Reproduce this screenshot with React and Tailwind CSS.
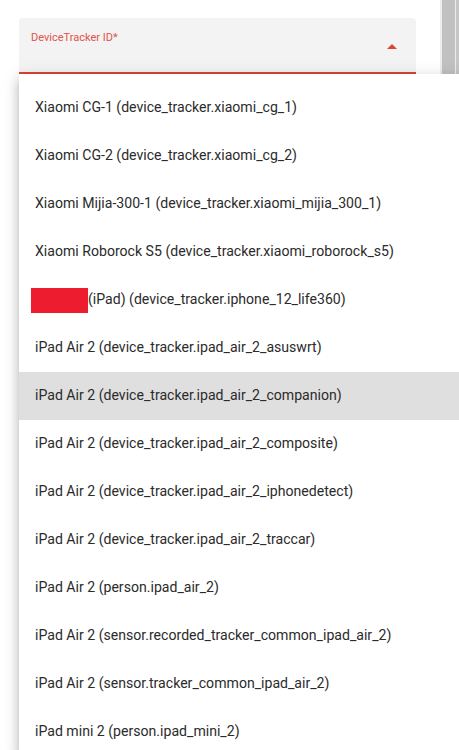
import React from 'react';

const items = [
  'Xiaomi CG-1 (device_tracker.xiaomi_cg_1)',
  'Xiaomi CG-2 (device_tracker.xiaomi_cg_2)',
  'Xiaomi Mijia-300-1 (device_tracker.xiaomi_mijia_300_1)',
  'Xiaomi Roborock S5 (device_tracker.xiaomi_roborock_s5)',
  '(iPad) (device_tracker.iphone_12_life360)',
  'iPad Air 2 (device_tracker.ipad_air_2_asuswrt)',
  'iPad Air 2 (device_tracker.ipad_air_2_companion)',
  'iPad Air 2 (device_tracker.ipad_air_2_composite)',
  'iPad Air 2 (device_tracker.ipad_air_2_iphonedetect)',
  'iPad Air 2 (device_tracker.ipad_air_2_traccar)',
  'iPad Air 2 (person.ipad_air_2)',
  'iPad Air 2 (sensor.recorded_tracker_common_ipad_air_2)',
  'iPad Air 2 (sensor.tracker_common_ipad_air_2)',
  'iPad mini 2 (person.ipad_mini_2)',
];

export default function App() {
  return (
    <div className="relative h-[750px] w-[459px] overflow-hidden bg-white" style={{ fontFamily: 'Roboto, "Liberation Sans", sans-serif' }}>
      {/* scrollbar */}
      <div className="absolute right-0 top-0 flex h-full w-[19px]">
        <div className="w-[2px] bg-[#ececec]" />
        <div className="w-[13px] bg-[#c1c1c1]" />
        <div className="w-[1px] bg-[#ececec]" />
        <div className="w-[3px] bg-[#c6c6c6]" />
      </div>

      <div className="pl-[19px] pt-[18px]">
        {/* select field */}
        <div className="relative h-[56px] w-[397px] rounded-t-[4px] border-b-2 border-[#db4437] bg-[#f3f3f3]">
          <span className="absolute left-[12px] top-[12px] text-[11px] text-[#e0534a]">DeviceTracker ID*</span>
          <span className="absolute left-[368px] top-[26px] h-0 w-0 border-x-[5px] border-b-[5px] border-x-transparent border-b-[#db4437]" />
        </div>

        {/* dropdown */}
        <div className="relative z-10 w-[460px] bg-white pt-[10px] shadow-[0_5px_5px_-3px_rgba(0,0,0,0.2),0_8px_10px_1px_rgba(0,0,0,0.14),0_3px_14px_2px_rgba(0,0,0,0.12)]">
          {items.map((t, i) => (
            <div
              key={i}
              className={`flex h-[48px] items-center px-4 text-[14.1px] text-[#2b2b2b] ${i === 6 ? 'bg-[#dfdfdf]' : ''}`}
            >
              {i === 4 && <span className="ml-[-4px] inline-block h-[25px] w-[57px] bg-[#ed1c2e]" />}
              <span>{t}</span>
            </div>
          ))}
        </div>
      </div>
    </div>
  );
}
